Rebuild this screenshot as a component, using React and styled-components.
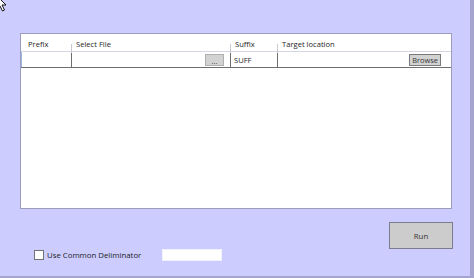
import React from "react";
import styled, { createGlobalStyle } from "styled-components";

const Global = createGlobalStyle`
  html, body { margin: 0; padding: 0; }
  body {
    width: 474px;
    height: 278px;
    overflow: hidden;
    background: #a4a4cf;
    font-family: "Open Sans", "Noto Sans", sans-serif;
    color: #1e1e1e;
  }
`;

const Window = styled.div`
  position: relative;
  width: 470px;
  height: 276px;
  background: #ccccff;
  display: flex;
  flex-direction: column;
`;

const Grid = styled.div`
  margin: 33px 0 0 20px;
  width: 430px;
  height: 174px;
  background: #fff;
  border: 1px solid #9c9cbc;
`;

const Row = styled.div`
  display: grid;
  grid-template-columns: 51px 159px 47px 173px;
  height: ${(p) => (p.$header ? "17px" : "15px")};
  border-bottom: 1px solid ${(p) => (p.$header ? "#d6d6e4" : "#6e6e6e")};
`;

const HeadCell = styled.div`
  position: relative;
  font-size: 7.6px;
  line-height: 17px;
  padding: 2px 0 0 ${(p) => (p.$first ? "7px" : "4px")};
  box-sizing: border-box;
  white-space: nowrap;
  &::before {
    content: "";
    display: ${(p) => (p.$first ? "none" : "block")};
    position: absolute;
    left: -1px;
    bottom: 0;
    width: 1px;
    height: 9px;
    background: #c8c8d4;
  }
`;

const Cell = styled.div`
  display: flex;
  align-items: center;
  justify-content: ${(p) => (p.$end ? "flex-end" : "flex-start")};
  border-right: ${(p) => (p.$last ? "none" : "1px solid #6e6e6e")};
  border-left: ${(p) => (p.$focus ? "1px solid #9bb8e0" : "none")};
  padding: 0 ${(p) => p.$pr || 0}px 0 3px;
  font-size: 7.6px;
  box-sizing: border-box;
  white-space: nowrap;
`;

const CellButton = styled.div`
  width: ${(p) => p.$w}px;
  height: 12px;
  box-sizing: border-box;
  background: #d2d2d2;
  border: 1px solid ${(p) => p.$border};
  font-size: 7.4px;
  line-height: ${(p) => p.$lh}px;
  text-align: center;
  color: #333;
`;

const RunRow = styled.div`
  display: flex;
  justify-content: flex-end;
  margin: 13px 17px 0 0;
`;

const RunButton = styled.div`
  width: 64px;
  height: 27px;
  box-sizing: border-box;
  background: #cccccc;
  border: 1px solid #7c7c8e;
  display: flex;
  align-items: center;
  justify-content: center;
  font-size: 7.8px;
  color: #333;
`;

const Options = styled.div`
  display: flex;
  align-items: center;
  margin-left: 34px;
  height: 12px;
`;

const Check = styled.div`
  width: 10px;
  height: 10px;
  box-sizing: border-box;
  background: #fff;
  border: 1px solid #737373;
  margin-right: 3px;
`;

const Label = styled.span`
  font-size: 7.8px;
  color: #222;
  width: 115px;
`;

const TextBox = styled.div`
  width: 60px;
  height: 12px;
  background: #fff;
  border: 1px solid #f2f2ff;
  box-sizing: border-box;
`;

const Cursor = styled.svg`
  position: absolute;
  left: -4px;
  top: -5px;
`;

export default function App() {
  return (
    <>
      <Global />
      <Window>
        <Cursor width="14" height="18" viewBox="0 0 14 18">
          <path
            d="M1 1 L1 14 L4 11 L6.5 16 L8.5 15 L6 10 L10 10 Z"
            fill="#fff"
            stroke="#111"
            strokeWidth="1"
          />
        </Cursor>
        <Grid>
          <Row $header>
            <HeadCell $first>Prefix</HeadCell>
            <HeadCell>Select File</HeadCell>
            <HeadCell>Suffix</HeadCell>
            <HeadCell>Target location</HeadCell>
          </Row>
          <Row>
            <Cell $focus />
            <Cell $end $pr={6}>
              <CellButton $w={19} $border="#b0b0b0" $lh={13}>...</CellButton>
            </Cell>
            <Cell>SUFF</Cell>
            <Cell $end $last $pr={10}>
              <CellButton $w={32} $border="#7a7a7a" $lh={10}>Browse</CellButton>
            </Cell>
          </Row>
        </Grid>
        <RunRow>
          <RunButton>Run</RunButton>
        </RunRow>
        <Options>
          <Check />
          <Label>Use Common Deliminator</Label>
          <TextBox />
        </Options>
      </Window>
    </>
  );
}
